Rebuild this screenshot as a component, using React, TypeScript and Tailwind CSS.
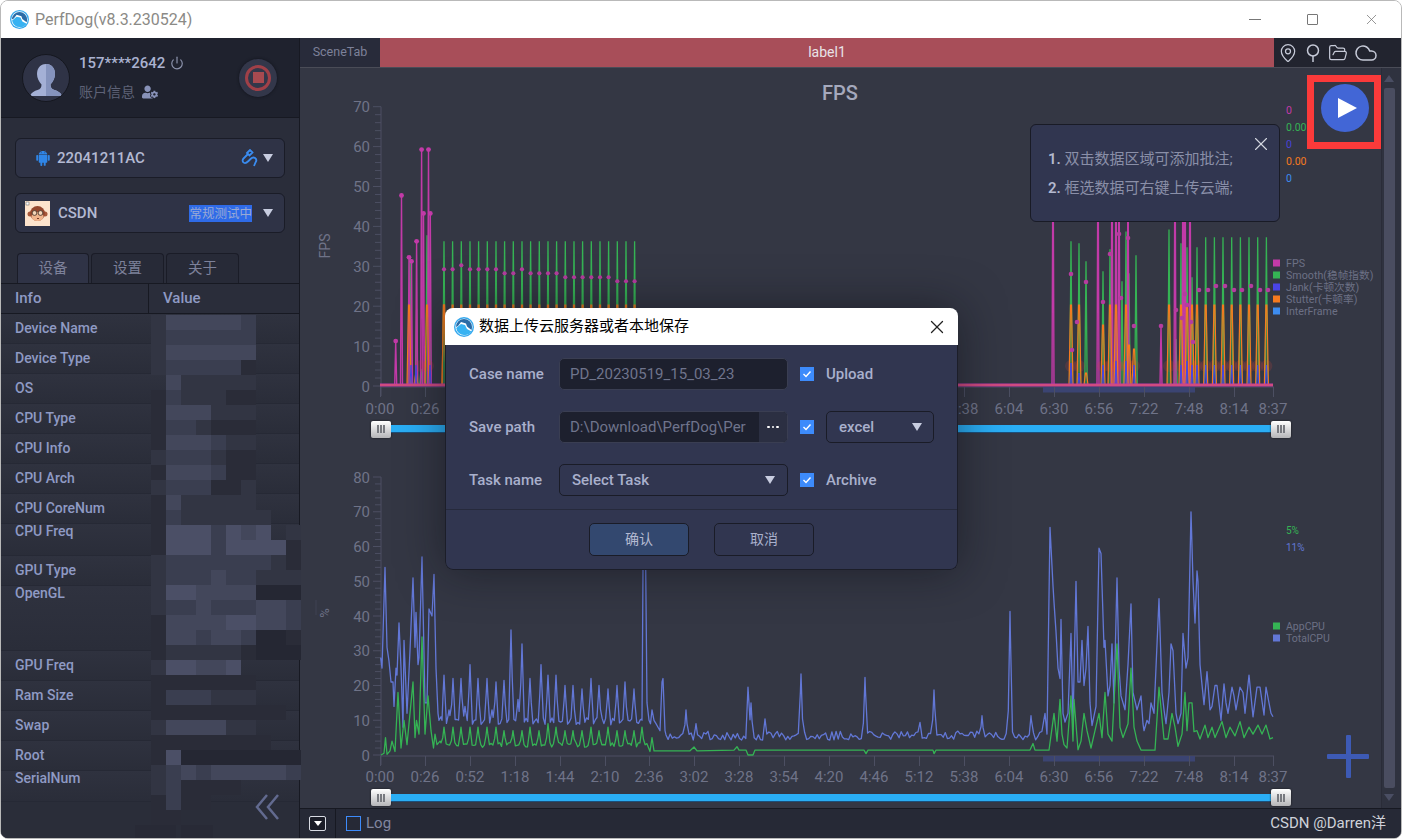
import { Cloud, FolderOpen, MapPin, Power, X } from "lucide-react";
import { FaUserCog } from "react-icons/fa";
import { AiFillAndroid } from "react-icons/ai";

const TICKS: [number, string][] = [
  [380, "0:00"], [425, "0:26"], [470, "0:52"], [515, "1:18"], [560, "1:44"], [605, "2:10"], [649, "2:36"],
  [694, "3:02"], [739, "3:28"], [784, "3:54"], [829, "4:20"], [874, "4:46"], [919, "5:12"], [964, "5:38"],
  [1009, "6:04"], [1054, "6:30"], [1099, "6:56"], [1144, "7:22"], [1189, "7:48"], [1234, "8:14"], [1273, "8:37"],
];

const noise = (x: number) => {
  const s = Math.sin(x * 12.9898) * 43758.5453;
  return s - Math.floor(s);
};

type P = [number, number];

const gen = (from: number, to: number, step: number, base: number, amp: number, peaks: P[], hw = 2.6): P[] => {
  const xs: number[] = [];
  for (let x = from; x < to; x += step) xs.push(x);
  peaks.forEach((p) => xs.push(p[0]));
  xs.sort((a, b) => a - b);
  return xs.map((x) => {
    let v = base + noise(x) * amp;
    peaks.forEach(([px, pv]) => {
      const d = Math.abs(x - px);
      if (d < hw) v = Math.max(v, pv - ((pv - base) * d) / hw);
    });
    return [x, v] as P;
  });
};

const totalLeft: P[] = [
  [380.7, 28], [382, 25], [385, 54], [387, 31], [389, 27], [391, 21], [393, 21], [394, 14], [396, 25], [397, 23], [399, 38],
  [401, 25], [403, 8], [404, 33], [407, 12], [410, 30], [413, 51], [415, 31], [416, 41], [418, 26], [419, 28], [422, 57],
  [425, 15], [427, 15], [429, 42], [432, 40], [434, 52], [436, 25], [438, 12], [439, 10], [441, 11], [442, 10],
];
const totalMid1 = gen(443, 642, 1.73, 8.6, 2.2, [
  [444, 23], [453, 22], [461, 22], [470, 26], [478, 22], [487, 22], [496, 21], [504, 21.5], [511, 36], [522, 32],
  [530, 22], [541, 26], [548, 23], [556, 23], [565, 20], [573, 20], [582, 19], [591, 22], [599, 20], [608, 19], [617, 20],
  [625, 21], [634, 19], [449, 13], [465, 14], [492, 13], [518, 16],
], 2.4);
const totalSpike: P[] = [[642, 10], [643.5, 75], [645, 75], [647, 15], [649, 10], [650.5, 9], [652, 13], [654, 10], [656, 9], [658, 8], [660, 7], [662, 21], [663, 22], [665, 7]];
const totalMid2 = gen(666, 1044, 2.1, 4.3, 2.6, [
  [686, 13], [696, 9], [748, 19.5], [751, 15], [765, 10.4], [801, 23.3], [865, 22.3], [920, 9.4], [934, 18.7], [982, 11.3],
  [1010, 41.3], [1031, 11.3],
], 2.2);
const totalRight: P[] = [
  [1045, 12], [1047, 6], [1050, 65.5], [1053, 48.7], [1054, 44], [1056, 35.5], [1058, 25], [1060, 22], [1061, 39], [1063, 12], [1065, 9.5], [1068, 12],
  [1071, 35], [1073, 9], [1076, 50], [1078, 21], [1080, 21], [1082, 33], [1084, 20], [1086, 25], [1088, 37], [1090, 15], [1092, 8.5], [1096, 14], [1099, 59.5], [1101, 58],
  [1104, 31], [1105, 33], [1108, 17], [1110, 20], [1112, 32], [1114, 15], [1117, 51], [1119, 25], [1121, 17], [1125, 13], [1128, 26], [1131, 43.5], [1133, 18],
  [1137, 13], [1141, 17], [1143, 9], [1144, 7], [1147, 10], [1149, 9], [1151, 15], [1154, 12], [1159, 45], [1162, 18], [1164, 13], [1166, 9], [1169, 18], [1171, 32], [1173, 30],
  [1176, 12], [1178, 9], [1181, 12], [1183, 35], [1186, 25], [1188, 28], [1191, 70], [1193, 50], [1195, 38], [1197, 53], [1198, 50], [1200, 26], [1204, 14.5], [1207, 24],
  [1210, 13], [1212, 14], [1215, 20], [1217, 20], [1221, 10], [1224, 20.5], [1226, 15], [1228, 12], [1232, 19.5], [1234, 17], [1236, 13], [1240, 19.5], [1243, 18], [1245, 12],
  [1249, 23], [1253, 11], [1257, 19.5], [1260, 19.5], [1264, 11.5], [1266, 19.5], [1269, 15], [1271, 12], [1273, 11],
];
const totalCpu = [...totalLeft, ...totalMid1, ...totalSpike, ...totalMid2, ...totalRight];

const appCpu: P[] = [
  [381, 0], [384, 0.5], [385.5, 5], [387, 0.2], [390, 1.2], [392, 4], [395, 1], [398, 18], [401, 2], [404, 10], [407, 3], [413, 21], [415, 5],
  [416.5, 10], [419, 6], [422, 34], [425, 6], [428, 17], [431, 7], [433.5, 2], [435, 6], [437, 3], [440, 4],
  ...gen(441, 648, 1.73, 2.2, 1.4, [
    [444, 8], [453, 8], [461, 8], [470, 8], [478, 8], [487, 8], [496, 8], [504, 7], [513, 7], [522, 7], [530, 8], [539, 7], [548, 9],
    [556, 8], [565, 7], [573, 7], [582, 7], [591, 8], [599, 7], [608, 8], [617, 7], [625, 7], [634, 7], [642, 8],
  ], 2.4),
  [650, 1], [652, 5], [654, 1.2], [690, 1.2], [694, 2.3], [697, 1.2], [734, 1.4], [737, 2.4], [739, 1.4], [746, 1.4], [748, 0], [753, 0], [755, 1.4],
  [864, 1.4], [866, 0.4], [868, 1.4], [933, 1.4], [934, 0.4], [936, 1.4], [1030, 1.4], [1033, 3.3], [1035, 1.4], [1049, 1.4], [1054, 12], [1057, 4], [1060, 16], [1062, 6], [1064, 3],
  [1067, 2], [1071, 17], [1073, 4], [1074, 16], [1078, 1.5], [1081, 4], [1084, 12], [1087, 7], [1091, 2], [1095, 7], [1099, 12], [1102, 5], [1105, 18], [1108, 6], [1112, 4],
  [1117, 32], [1120, 8], [1123, 5], [1128, 9], [1131, 25], [1134, 8], [1137, 4], [1141, 1.4], [1155, 1.4], [1159, 19.5], [1164, 4.6], [1168, 4.6], [1172, 12], [1175, 8], [1178, 2.5],
  [1182, 6], [1185, 18], [1187, 7], [1189, 15], [1192, 15], [1194, 6.7], [1197, 7], [1200, 4.6], [1205, 8.6], [1208, 5], [1212, 8], [1215, 5], [1222, 9.6], [1226, 5], [1230, 8],
  [1235, 5.5], [1240, 9.6], [1244, 5], [1249, 8], [1253, 6], [1258, 8.6], [1262, 6], [1266, 8.6], [1270, 4.6], [1273, 5],
];

const toCpu = (pts: P[]) => pts.map(([x, v]) => `${x},${(755 - v * 3.475).toFixed(1)}`).join(" ");
const fy = (v: number) => 385 - v * 3.99;

const series1 = [444, 452.6, 461.3, 470, 478.6, 487.3, 496, 504.6, 513.3, 522, 530.6, 539.3, 548, 556.6, 565.3, 574, 582.6, 591.3, 600, 608.6, 617.3, 626, 634.6];
const series1V = [29, 29, 30, 29, 29, 29, 29, 28, 28, 29, 28, 28, 28, 28, 27, 27, 27, 27, 27, 27, 26, 26, 26];
const series2 = [1197, 1205.7, 1214.4, 1223, 1231.7, 1240.4, 1249, 1257.7, 1266.4];

const greens: P[] = [
  [410, 32], [416.6, 19], [421, 4], [427, 37.5], [430, 20],
  ...series1.map((x) => [x, 36] as P),
  [1071, 36], [1079, 35.5], [1086, 31], [1103, 28.5], [1110, 34], [1116, 28.5], [1126, 38.5], [1122, 26], [1129, 28], [1136, 32.5],
  [1169, 39], [1176, 11.5], [1181, 35.5], [1187, 34.5], [1192, 27], [1197, 34.5],
  ...series2.slice(1).map((x) => [x, 37] as P),
];
const oranges: P[] = [
  [409, 20], [416, 2.5], [427, 20], [444, 20],
  ...series1.map((x) => [x, 20] as P),
  [1071, 20], [1079, 20], [1086, 3], [1103, 15], [1110, 20], [1116, 20], [1126, 20], [1129, 10], [1134, 9],
  [1169, 20], [1181, 20], [1187, 20], [1192, 20],
  ...series2.map((x) => [x, 20] as P),
];
const blues: P[] = [
  [411, 5], [416, 5], [430, 5], [1071, 5.5], [1079, 3], [1103, 5], [1116, 6], [1126, 6], [1134, 5], [1181, 5], [1187, 6], [1192, 5],
  ...series2.map((x) => [x, 5] as P),
];
const magSpikes: P[] = [
  [395.7, 11], [401.5, 47.5], [409, 32], [411.5, 31], [416.6, 36], [421.6, 59], [423.5, 43], [428.5, 59], [430.3, 43],
  [1053, 65], [1098, 65], [1112, 65], [1116, 65], [1119, 60], [1128, 59], [1161, 15], [1175, 65], [1183, 65], [1185, 65], [1190, 65],
];
const magDots: P[] = [
  [1071, 274], [1077, 322], [1072, 350], [1086, 282], [1103, 302], [1110, 254], [1119, 234], [1128, 238], [1121, 298], [1134, 326], [1161, 326],
  [1176, 310], [1185, 294], [1182, 318], [1187, 305], [1191, 322], [1193, 342], [1199, 290], [1208, 290], [1216, 286], [1225, 286], [1234, 290],
  [1242, 290], [1251, 286], [1260, 290], [1268, 290],
];
const glows = [421, 428, 1071, 1079, 1103, 1110, 1116, 1118, 1126, 1129, 1134, 1169, 1181, 1187, 1192, ...series2];

const AXIS = "#4c4f62";
const LABEL = "#6f7388";

function YAxis({ zero, per10, max }: { zero: number; per10: number; max: number }) {
  const items = [];
  for (let i = 0; i <= max / 2; i++) {
    const y = zero - (i * per10) / 5;
    const major = i % 5 === 0;
    items.push(<line key={i} x1={major ? 373 : 375} x2={381} y1={y} y2={y} stroke={AXIS} strokeWidth={1} />);
  }
  const labels = [];
  for (let v = 0; v <= max; v += 10) {
    labels.push(
      <text key={v} x={370} y={zero - (v / 10) * per10 + 5.5} textAnchor="end" fontSize={15} fill={LABEL}>
        {v}
      </text>,
    );
  }
  return (
    <g>
      <line x1={381} x2={381} y1={zero - (max / 10) * per10} y2={zero + 10} stroke={AXIS} />
      {items}
      {labels}
    </g>
  );
}

function XAxis({ y, labelY }: { y: number; labelY: number }) {
  return (
    <g>
      <line x1={380} x2={1274} y1={y} y2={y} stroke={AXIS} />
      <rect x={1043} y={y} width={152} height={5.5} fill="#3b4472" />
      {TICKS.map(([x, t]) => (
        <g key={t}>
          <line x1={x + 0.5} x2={x + 0.5} y1={y} y2={y + 10} stroke={AXIS} />
          <text x={x} y={labelY} textAnchor="middle" fontSize={15} fill={LABEL}>
            {t}
          </text>
        </g>
      ))}
    </g>
  );
}

function Legend({ items, y0, size }: { items: [string, string][]; y0: number; size: number }) {
  return (
    <g>
      {items.map(([c, t], i) => (
        <g key={t}>
          <rect x={1273} y={y0 + i * 12 - 3.5} width={7} height={7} fill={c} />
          <text x={1286} y={y0 + i * 12 + 3.5} fontSize={size} fill="#6c7085">
            {t}
          </text>
        </g>
      ))}
    </g>
  );
}

function FpsChart() {
  return (
    <svg viewBox="300 68 1081 350" className="block h-[350px] w-[1081px]">
      <text x={840} y={100} textAnchor="middle" fontSize={20} fontWeight={500} fill="#a5a9bd">FPS</text>
      <text transform="translate(330 246) rotate(-90)" textAnchor="middle" fontSize={14} fill={LABEL}>FPS</text>
      <YAxis zero={386} per10={39.9} max={70} />
      <XAxis y={387} labelY={414} />
      {[[1286, 114, "#c23aa8", "0"], [1286, 131, "#35b354", "0.00"], [1286, 148, "#4a44d8", "0"], [1286, 165, "#f57a1f", "0.00"], [1286, 182, "#3d8cf0", "0"]].map(([x, y, c, t], i) => (
        <text key={i} x={x as number} y={y as number} fontSize={10.5} fill={c as string}>{t as string}</text>
      ))}
      <Legend y0={263} size={10.7} items={[["#c23aa8", "FPS"], ["#35b354", "Smooth(稳帧指数)"], ["#4a44e8", "Jank(卡顿次数)"], ["#f57a1f", "Stutter(卡顿率)"], ["#3d8cf0", "InterFrame"]]} />
      {greens.map(([x, v], i) => (
        <polyline key={i} points={`${x - 1.2},385 ${x},${fy(v)} ${x + 1.2},385`} fill="none" stroke="#35b354" strokeWidth={1.3} />
      ))}
      {magSpikes.map(([x, v], i) => (
        <polyline key={i} points={`${x - 1},385 ${x},${fy(v)} ${x + 1},385`} fill="none" stroke="#c23aa8" strokeWidth={1.4} />
      ))}
      {glows.map((x, i) => (
        <circle key={i} cx={x} cy={366} r={6} fill="#e8433a" opacity={0.16} />
      ))}
      {oranges.map(([x, v], i) => (
        <polyline key={i} points={`${x - 2},385 ${x - 0.5},${fy(v)} ${x + 0.5},${fy(v)} ${x + 2},385`} fill="none" stroke="#f57a1f" strokeWidth={1.2} />
      ))}
      {blues.map(([x, v], i) => (
        <polyline key={i} points={`${x - 1},385 ${x},${fy(v)} ${x + 1},385`} fill="none" stroke="#4a44e8" strokeWidth={1} />
      ))}
      <line x1={380} x2={1273} y1={385} y2={385} stroke="#c23aa8" strokeWidth={3} />
      <line x1={380} x2={1273} y1={385} y2={385} stroke="#f57a1f" strokeWidth={0.8} opacity={0.7} />
      {magSpikes.slice(0, 9).map(([x, v], i) => (
        <circle key={i} cx={x} cy={fy(v)} r={2.4} fill="#c23aa8" />
      ))}
      {series1.map((x, i) => (
        <circle key={i} cx={x} cy={fy(series1V[i])} r={2.1} fill="#b53c9f" />
      ))}
      {magDots.map(([x, y], i) => (
        <circle key={i} cx={x} cy={y} r={2.3} fill="#b53c9f" />
      ))}
    </svg>
  );
}

function CpuChart() {
  return (
    <svg viewBox="300 440 1081 347" className="block h-[347px] w-[1081px]">
      <text transform="translate(329 613) rotate(-90)" textAnchor="middle" fontSize={13} fill={LABEL}>%</text>
      <line x1={316} x2={316} y1={600} y2={615} stroke="#3f4253" />
      <YAxis zero={755} per10={34.75} max={80} />
      <XAxis y={756} labelY={782} />
      <text x={1286} y={534} fontSize={10} fill="#35b354">5%</text>
      <text x={1286} y={551} fontSize={10} fill="#6277d6">11%</text>
      <Legend y0={626} size={10.5} items={[["#35b354", "AppCPU"], ["#6277d6", "TotalCPU"]]} />
      <polyline points={toCpu(totalCpu)} fill="none" stroke="#6277d6" strokeWidth={1.3} strokeLinejoin="round" />
      <polyline points={toCpu(appCpu)} fill="none" stroke="#35b354" strokeWidth={1.3} strokeLinejoin="round" />
    </svg>
  );
}

function Thumb() {
  return (
    <div className="flex h-[17px] w-[20px] shrink-0 items-center justify-center gap-px rounded-[2px] bg-gradient-to-b from-white to-[#b5b5b8] shadow-[0_0_2px_#111]">
      <span className="h-[8px] w-[2px] bg-[#77797f]" />
      <span className="h-[8px] w-[2px] bg-[#77797f]" />
      <span className="h-[8px] w-[2px] bg-[#77797f]" />
    </div>
  );
}

function Slider({ h }: { h: string }) {
  return (
    <div className={`flex items-center pl-[71px] ${h}`}>
      <Thumb />
      <div className="h-[8px] w-[880px] border-b border-[#1d4f7a] bg-[#2aaef5]" />
      <Thumb />
    </div>
  );
}

function Logo({ size = 19 }: { size?: number }) {
  return (
    <svg width={size} height={size} viewBox="0 0 20 20" className="shrink-0">
      <circle cx="10" cy="10" r="10" fill="#37a9ee" />
      <circle cx="10" cy="10" r="8.6" fill="#fff" />
      <path d="M2 10a8 8 0 0 1 8-8 8 8 0 0 1 8 8c0 1-.2 2-.5 3L13 9.5l-1-3L7 5 4 9z" fill="#2b6ba6" />
      <path d="M2.2 11 7 7l4 1 2 4 4.5 2.5A8 8 0 0 1 10 18a8 8 0 0 1-7.800-7z" fill="#37b2f2" />
    </svg>
  );
}

function Caret({ c = "border-t-[#c8cde0]" }: { c?: string }) {
  return <span className={`h-0 w-0 border-x-[5.5px] border-t-[8px] border-x-transparent ${c}`} />;
}

const ROWS: [string, string][] = [
  ["Device Name", "h-[30px] items-center"],
  ["Device Type", "h-[30px] items-center"],
  ["OS", "h-[30px] items-center"],
  ["CPU Type", "h-[30px] items-center"],
  ["CPU Info", "h-[30px] items-center"],
  ["CPU Arch", "h-[30px] items-center"],
  ["CPU CoreNum", "h-[30px] items-center"],
  ["CPU Freq", "h-[32px] items-start"],
  ["GPU Type", "h-[30px] items-center"],
  ["OpenGL", "h-[65px] items-start"],
  ["GPU Freq", "h-[30px] items-center"],
  ["Ram Size", "h-[30px] items-center"],
  ["Swap", "h-[30px] items-center"],
  ["Root", "h-[30px] items-center"],
  ["SerialNum", "h-[31px] items-start"],
];

const PAL: Record<string, string> = { a: "#4b4f66", b: "#43475b", c: "#3a3e50", d: "#323543", e: "#2a2c38", f: "#252733" };
const MOSAIC: [number, string][] = [
  [315, "dbbbbbc"], [330, "dcccccc"], [345, "dbbbbbb"], [360, "dccccce"], [375, ".bddddd"], [390, "ecdddee"], [405, "ebbbddd"], [420, "eccdeee"],
  [435, "ebbbcdd"], [450, "dcccdee"], [465, "ebbbcee"], [480, "dccceed"], [495, "ebddddd"], [510, "ecdddddd"],
  [525, "eaaacaba.d"], [540, "eaaacaaaae"], [555, "dcccccccde"], [570, "dcccbccddd"], [585, "daabbbbfff"], [600, "dccbcccbbc"], [615, "ebbbbaabbc"],
  [630, "ebbcbbcffe"], [645, "edddddefff"], [660, "daabba"], [675, "eeeeeee"], [690, "ecccddd"], [705, "eeeeeeeee"], [720, "dbbbbdd"], [735, "eeeeeeee"],
  [750, "eaffffffff"], [765, "dcbcbbbbbc"], [780, "dceeee"], [795, "ecee"], [810, "ee"],
];

function Mosaic() {
  return (
    <svg viewBox="0 38 300 801" className="pointer-events-none absolute left-0 top-0 h-[801px] w-[300px]">
      {MOSAIC.map(([y, s]) =>
        s.split("").map((ch, i) =>
          ch === "." ? null : <rect key={`${y}-${i}`} x={150 + i * 15} y={y} width={15} height={15} fill={PAL[ch]} />,
        ),
      )}
      <rect x={134} y={825} width={41} height={14} fill="#282a36" />
      <rect x={180} y={825} width={32} height={14} fill="#282a36" />
    </svg>
  );
}

function Monkey() {
  return (
    <svg width="25" height="25" viewBox="0 0 25 25" className="shrink-0">
      <rect width="25" height="25" fill="#fde4cd" />
      <circle cx="5" cy="13" r="2.5" fill="#a8583a" />
      <circle cx="20" cy="13" r="2.5" fill="#a8583a" />
      <circle cx="12.500" cy="12.500" r="7.500" fill="#96492f" />
      <ellipse cx="12.500" cy="15.500" rx="6" ry="4.500" fill="#f0b48c" />
      <circle cx="9.500" cy="12" r="2.400" fill="#f3d5b8" stroke="#3a2a22" strokeWidth="0.8" />
      <circle cx="15.500" cy="12" r="2.400" fill="#f3d5b8" stroke="#3a2a22" strokeWidth="0.8" />
      <rect x="12" y="17" width="2" height="1" fill="#7a3a28" />
      <rect x="1" y="1" width="3" height="3" fill="#fff" stroke="#555" strokeWidth="0.5" />
    </svg>
  );
}

function Sidebar() {
  return (
    <div className="flex h-full w-[298px] shrink-0 flex-col bg-[#2a2d3a] text-[14px]">
      <div className="flex h-[80px] shrink-0 items-center border-b border-[#171922] bg-[#1f222e] pl-[21px]">
        <div className="flex h-[48px] w-[48px] items-end justify-center overflow-hidden rounded-full border border-[#15171f] bg-[#2f3346]">
          <svg width="32" height="40" viewBox="0 0 32 40">
            <path d="M16 3c-6 0-9 4.500-9 10 0 4 2 8 4.500 10.500 0 3-1 4.500-4 5.500-3 1-6 2.500-7 5v1h31v-1c-1-2.500-4-4-7-5-3-1-4-2.500-4-5.500C23 21 25 17 25 13c0-5.500-3-10-9-10z" fill="#a4b0d6" />
            <path d="M16 3c6 0 9 4.500 9 10 0 4-2 8-4.500 10.500 0 3 1 4.500 4 5.500 3 1 6 2.500 7 5v1H16z" fill="#8593bd" />
          </svg>
        </div>
        <div className="ml-[9px] flex w-[118px] flex-col gap-[10px]">
          <div className="mt-[1px] flex items-center gap-[5px] text-[15px] font-medium leading-[18px] text-[#aab2d0]">
            157****2642 <Power size={14} className="text-[#8d94ad]" />
          </div>
          <div className="flex items-center gap-[7px] text-[14px] leading-[20px] text-[#5e6277]">
            账户信息 <FaUserCog size={16} className="text-[#8892b8]" />
          </div>
        </div>
        <div className="ml-[42px] flex h-[38px] w-[38px] items-center justify-center rounded-full bg-[#33374a] shadow-[0_0_3px_#11131a]">
          <div className="flex h-[26px] w-[26px] items-center justify-center rounded-full border-[3px] border-[#a04048]">
            <div className="h-[11px] w-[11px] bg-[#a84a50]" />
          </div>
        </div>
      </div>
      <div className="flex flex-col gap-[15px] px-[14px] pt-[20px]">
        <div className="flex h-[40px] items-center rounded-[6px] border border-[#1a1c27] bg-[#2f3346] pl-[18px] pr-[11px]">
          <AiFillAndroid size={18} className="text-[#2f86e8]" />
          <span className="ml-[5px] mt-[1px] flex-1 text-[15px] font-medium text-[#b3b9d2]">22041211AC</span>
          <svg width="20" height="18" viewBox="0 0 20 18" fill="none" stroke="#3a8cf0" strokeWidth="1.800" className="mr-[2px]">
            <path d="M7 5 2.500 9.500c-1.500 1.500-1 4 1 4.500 1.500.5 2.500-.5 4-2l2-2c1.500-1.500 3-2 4.500-1 1.500 1 1.500 3 .5 4.500L13 17" />
            <path d="m6 4 3-3 2.500 2.500-3 3z" />
          </svg>
          <Caret />
        </div>
        <div className="flex h-[40px] items-center rounded-[6px] border border-[#1a1c27] bg-[#2f3346] pl-[9px] pr-[11px]">
          <Monkey />
          <span className="ml-[8px] mt-[1px] flex-1 text-[15px] font-medium text-[#b3b9d2]">CSDN</span>
          <span className="mr-[11px] bg-[#2f6be8] text-[12.500px] leading-[17px] text-[#9aa9d4]">常规测试中</span>
          <Caret />
        </div>
      </div>
      <div className="mt-[20px] flex gap-[2px] pl-[16px] text-[14.500px]">
        <div className="flex h-[30px] w-[72px] items-center justify-center rounded-t-[4px] border border-b-0 border-[#1a1c27] bg-[#2f3346] text-[#7d819a]">设备</div>
        <div className="flex h-[30px] w-[73px] items-center justify-center rounded-t-[4px] border border-b-0 border-[#1a1c27] bg-[#272a37] text-[#7d819a]">设置</div>
        <div className="flex h-[30px] w-[73px] items-center justify-center rounded-t-[4px] border border-b-0 border-[#1a1c27] bg-[#272a37] text-[#7d819a]">关于</div>
      </div>
      <div className="flex h-[31px] shrink-0 items-center border-y border-[#171922] bg-[#2a2d3a] text-[15px] font-medium text-[#8f9ac4]">
        <div className="flex h-full w-[148px] items-center border-r border-[#171922] pl-[14px]">Info</div>
        <div className="pl-[14px]">Value</div>
      </div>
      <div className="flex flex-col text-[14px] font-medium text-[#8f9ac4]">
        {ROWS.map(([name, cls]) => (
          <div key={name} className={`flex border-b border-[#262935] bg-gradient-to-b from-[#2f323f] to-[#2a2d39] pl-[14px] ${cls}`}>
            <span className={cls.includes("items-start") ? "w-[134px] leading-[14px]" : "w-[134px]"}>{name}</span>
            {name === "GPU Freq" ? <span className="pl-[80px] text-[#a3abc8]">e</span> : null}
          </div>
        ))}
      </div>
      <div className="flex flex-1 items-start justify-end bg-[#2a2d39] pr-[20px]">
        <svg width="24" height="26" viewBox="0 0 24 26" fill="none" stroke="#626a8f" strokeWidth="2.500" className="-mt-[8px]">
          <path d="M12 1 2 13l10 12" />
          <path d="M23 1 13 13l10 12" />
        </svg>
      </div>
    </div>
  );
}

function Check() {
  return (
    <span className="flex h-[14px] w-[14px] shrink-0 items-center justify-center bg-[#3d8bfb]">
      <svg width="10" height="10" viewBox="0 0 10 10" fill="none" stroke="#fff" strokeWidth="1.400">
        <path d="m1.500 5 2.500 2.500 4.500-5" />
      </svg>
    </span>
  );
}

function Dialog() {
  return (
    <div className="absolute left-[145px] top-[240px] z-10 h-[262px] w-[513px] overflow-hidden rounded-[8px] shadow-[0_0_45px_rgba(10,11,18,0.5)]">
      <div className="flex h-[37px] items-center bg-white pl-[9px] pr-[10px]">
        <Logo size={20} />
        <span className="ml-[5px] flex-1 text-[15px] text-black">数据上传云服务器或者本地保存</span>
        <X size={22} strokeWidth={1.4} className="text-[#222]" />
      </div>
      <div className="flex h-[225px] flex-col rounded-b-[8px] border border-t-0 border-[#1c1e29] bg-[#313650] text-[15px] font-medium text-[#a9b0cc]">
        <div className="flex flex-col gap-[21px] px-[23px] pt-[13px]">
          <div className="flex h-[32px] items-center">
            <span className="w-[90px] shrink-0">Case name</span>
            <div className="flex h-full w-[229px] items-center rounded-[5px] border border-[#3a3e52] bg-[#1d202e] pl-[10px] font-normal text-[#6f748c]">PD_20230519_15_03_23</div>
            <span className="ml-[12px]"><Check /></span>
            <span className="ml-[12px]">Upload</span>
          </div>
          <div className="flex h-[32px] items-center">
            <span className="w-[90px] shrink-0">Save path</span>
            <div className="flex h-full w-[229px] items-center overflow-hidden rounded-[5px] border border-[#3a3e52] bg-[#1d202e] pl-[10px] font-normal text-[#6f748c]">
              <span className="w-[176px] overflow-hidden whitespace-nowrap">D:\Download\PerfDog\PerfDog</span>
              <div className="ml-auto flex h-full w-[28px] items-center justify-center gap-[2px] bg-[#2b2f42]">
                <i className="h-[2.500px] w-[2.500px] rounded-full bg-white" />
                <i className="h-[2.500px] w-[2.500px] rounded-full bg-white" />
                <i className="h-[2.500px] w-[2.500px] rounded-full bg-white" />
              </div>
            </div>
            <span className="ml-[12px]"><Check /></span>
            <div className="ml-[12px] flex h-full w-[108px] items-center justify-between rounded-[5px] border border-[#1a1c27] pl-[12px] pr-[11px]">
              excel <Caret />
            </div>
          </div>
          <div className="flex h-[32px] items-center">
            <span className="w-[90px] shrink-0">Task name</span>
            <div className="flex h-full w-[229px] items-center justify-between rounded-[5px] border border-[#1a1c27] pl-[12px] pr-[12px]">
              Select Task <Caret />
            </div>
            <span className="ml-[12px]"><Check /></span>
            <span className="ml-[12px]">Archive</span>
          </div>
        </div>
        <div className="mt-[13px] flex flex-1 items-start justify-center gap-[25px] border-t border-[#262a3c] pt-[13px] text-[14px] font-normal">
          <div className="flex h-[33px] w-[100px] items-center justify-center rounded-[5px] border border-[#1a1c27] bg-[#33486f] text-[#b3bad2]">确认</div>
          <div className="flex h-[33px] w-[100px] items-center justify-center rounded-[5px] border border-[#1a1c27] text-[#a9b0cc]">取消</div>
        </div>
      </div>
    </div>
  );
}

function Main() {
  return (
    <div className="flex h-full min-w-0 flex-1 flex-col border-l border-[#171922]">
      <div className="flex h-[30px] shrink-0 items-stretch border-b border-[#4a4c57] bg-[#22242f]">
        <div className="flex w-[80px] items-center justify-center bg-[#282b3a] text-[12.500px] text-[#7d8199]">SceneTab</div>
        <div className="flex w-[894px] items-center justify-center bg-[#a84e59] text-[14px] text-[#e9e4e8]">label1</div>
        <div className="flex items-center gap-[6px] pl-[4px] text-[#c6cad8]">
          <MapPin size={20} strokeWidth={1.5} />
          <svg width="18" height="20" viewBox="0 0 18 20" fill="none" stroke="currentColor" strokeWidth="1.500">
            <circle cx="9" cy="7.500" r="5.500" />
            <path d="M9 13v6" />
          </svg>
          <FolderOpen size={20} strokeWidth={1.5} />
          <Cloud size={24} strokeWidth={1.5} />
        </div>
      </div>
      <div className="relative flex min-h-0 flex-1 bg-[#343744]">
        <div className="w-[1081px] shrink-0">
          <FpsChart />
          <Slider h="h-[22px]" />
          <CpuChart />
          <Slider h="h-[21px]" />
        </div>
        <div className="flex flex-1 flex-col items-center justify-between border-l border-[#2a2c38] bg-[#2f323f] py-[7px] pr-[5px]">
          <span className="h-0 w-0 border-x-[5px] border-b-[7px] border-x-transparent border-b-[#4a4e63]" />
          <div className="my-[6px] w-[11px] flex-1 rounded-[2px] bg-[#4a4d60]" />
          <span className="h-0 w-0 border-x-[5px] border-t-[7px] border-x-transparent border-t-[#4a4e63]" />
        </div>
        <Dialog />
        <div className="absolute left-[730px] top-[56px] h-[98px] w-[250px] rounded-[6px] border border-[#191b26] bg-[#313650] pl-[17px] pt-[20px] text-[15px] leading-[29px] text-[#8a8fa8]">
          <X size={22} strokeWidth={1.2} className="absolute right-[7px] top-[8px] text-[#d5d8e2]" />
          <div><b className="font-semibold text-[#b4b9cf]">1.</b> 双击数据区域可添加批注;</div>
          <div><b className="font-semibold text-[#b4b9cf]">2.</b> 框选数据可右键上传云端;</div>
        </div>
        <div className="absolute left-[1007px] top-[7px] flex h-[74px] w-[74px] items-start justify-center border-[7px] border-[#fb3a3a] pl-[2px] pt-[2px]">
          <div className="flex h-[48px] w-[48px] items-center justify-center rounded-full bg-[#4266d6]">
            <span className="ml-[4px] h-0 w-0 border-y-[10px] border-l-[19px] border-y-transparent border-l-white" />
          </div>
        </div>
        <div className="absolute left-[1027px] top-[667px] h-[43px] w-[42px]">
          <div className="absolute left-0 top-[19px] h-[5px] w-[42px] rounded-[1px] bg-[#3d5ab5]" />
          <div className="absolute left-[19px] top-0 h-[43px] w-[5px] rounded-[1px] bg-[#3d5ab5]" />
        </div>
      </div>
      <div className="flex h-[30px] shrink-0 items-center border-t border-[#171922] bg-[#262936]">
        <div className="flex h-full w-[36px] items-center justify-center border-r border-[#171922]">
          <div className="flex h-[15px] w-[17px] items-center justify-center rounded-[2px] border border-[#d8dbe4] bg-[#1b1d28]">
            <span className="h-0 w-0 border-x-[4px] border-t-[5px] border-x-transparent border-t-white" />
          </div>
        </div>
        <div className="ml-[10px] h-[15px] w-[15px] border border-[#3d8bfb]" />
        <span className="ml-[5px] text-[15px] text-[#8186a0]">Log</span>
        <span className="ml-auto pr-[15px] text-[15px] text-[#cfd2da]">CSDN @Darren洋</span>
      </div>
    </div>
  );
}

export default function App() {
  return (
    <div className="flex h-[839px] w-[1402px] flex-col overflow-hidden rounded-[8px] border border-[#b9b9b9] bg-white font-['Roboto','Noto_Sans_CJK_SC',sans-serif]">
      <div className="flex h-[37px] shrink-0 items-center bg-white pl-[9px] text-[#77746e]">
        <Logo />
        <span className="ml-[6px] text-[16px] text-[#8b8a86]">PerfDog(v8.3.230524)</span>
        <div className="ml-auto flex items-center text-[#6b6b6b]">
          <span className="mr-[46px] h-px w-[12px] bg-[#777]" />
          <span className="mr-[45px] h-[11px] w-[11px] rounded-[1px] border border-[#777]" />
          <X size={17} strokeWidth={1} className="mr-[21px]" />
        </div>
      </div>
      <div className="relative flex min-h-0 flex-1 bg-[#22242f]">
        <Sidebar />
        <Main />
        <Mosaic />
      </div>
    </div>
  );
}
